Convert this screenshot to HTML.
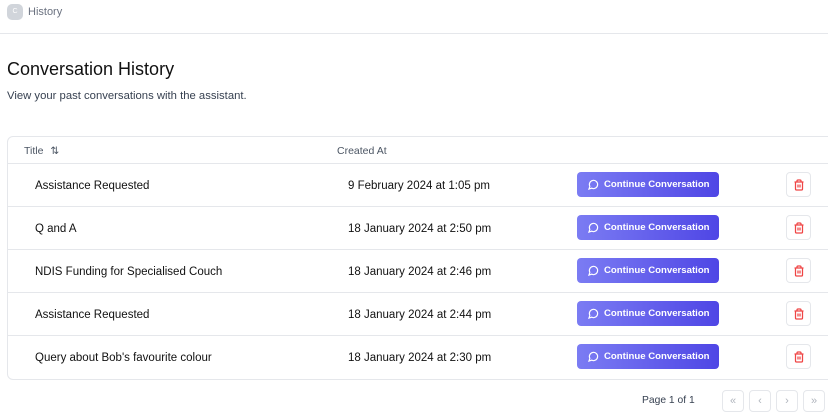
<!DOCTYPE html>
<html><head><style>
*{box-sizing:border-box;margin:0;padding:0}
body{width:828px;height:415px;overflow:hidden;background:#fff;font-family:"Liberation Sans",sans-serif;color:#111827;position:relative}
.top{height:34px;border-bottom:1px solid #e5e7eb;position:relative}
.av{position:absolute;left:7px;top:4px;width:16px;height:16px;border-radius:5px;background:#d1d5db;color:#fff;font-size:7px;text-align:center;line-height:16px}
.hist{position:absolute;left:28px;top:6px;font-size:11px;color:#6b7280}
h1{position:absolute;left:7px;top:59px;font-size:18px;font-weight:normal;color:#111}
.sub{position:absolute;left:7px;top:90px;font-size:11.3px;color:#374151}
.tbl{position:absolute;left:7px;top:136px;width:830px;height:244px;border:1px solid #e5e7eb;border-radius:6px}
.hd{height:27px;border-bottom:1px solid #e5e7eb;position:relative;font-size:10.5px;color:#4b5563}
.row{height:43px;border-bottom:1px solid #e5e7eb;position:relative;font-size:11.5px;color:#111}
.row:last-child{border-bottom:none}
.t{position:absolute;left:27px;top:15.5px}
.d{position:absolute;left:340px;top:15.5px}
.btn{position:absolute;left:569px;top:8px;width:142px;height:25px;border-radius:4px;background:linear-gradient(90deg,#7b7cf3,#4f46e5);color:#fff;font-size:9.6px;font-weight:bold;line-height:25px;padding-left:27px;white-space:nowrap}
.btn svg{position:absolute;left:11px;top:7px}
.del{position:absolute;left:778px;top:8px;width:25px;height:25px;border:1px solid #e5e7eb;border-radius:4px}
.del svg{position:absolute;left:6px;top:6px}
.pg{position:absolute;top:390px;width:22px;height:22px;border:1px solid #e5e7eb;border-radius:4px;color:#b0b5bd;font-size:11px;text-align:center;line-height:20px}
</style></head><body>
<div class="top"><div class="av">C</div><div class="hist">History</div></div>
<h1>Conversation History</h1>
<div class="sub">View your past conversations with the assistant.</div>
<div class="tbl">
<div class="hd"><span style="position:absolute;left:16px;top:8px">Title <span style="margin-left:4px">⇅</span></span><span style="position:absolute;left:329px;top:8px">Created At</span></div>
<div class="row"><span class="t">Assistance Requested</span><span class="d">9 February 2024 at 1:05 pm</span><div class="btn"><svg width="11" height="11" viewBox="0 0 24 24" fill="none" stroke="#fff" stroke-width="2.5"><path d="M7.9 20A9 9 0 1 0 4 16.1L2 22Z"/></svg>Continue Conversation</div><div class="del"><svg width="12" height="12" viewBox="0 0 24 24" fill="none" stroke="#ef4444" stroke-width="2.5"><path d="M3 6h18M19 6v14a2 2 0 0 1-2 2H7a2 2 0 0 1-2-2V6M8 6V4a2 2 0 0 1 2-2h4a2 2 0 0 1 2 2v2M10 11v6M14 11v6"/></svg></div></div>
<div class="row"><span class="t">Q and A</span><span class="d">18 January 2024 at 2:50 pm</span><div class="btn"><svg width="11" height="11" viewBox="0 0 24 24" fill="none" stroke="#fff" stroke-width="2.5"><path d="M7.9 20A9 9 0 1 0 4 16.1L2 22Z"/></svg>Continue Conversation</div><div class="del"><svg width="12" height="12" viewBox="0 0 24 24" fill="none" stroke="#ef4444" stroke-width="2.5"><path d="M3 6h18M19 6v14a2 2 0 0 1-2 2H7a2 2 0 0 1-2-2V6M8 6V4a2 2 0 0 1 2-2h4a2 2 0 0 1 2 2v2M10 11v6M14 11v6"/></svg></div></div>
<div class="row"><span class="t">NDIS Funding for Specialised Couch</span><span class="d">18 January 2024 at 2:46 pm</span><div class="btn"><svg width="11" height="11" viewBox="0 0 24 24" fill="none" stroke="#fff" stroke-width="2.5"><path d="M7.9 20A9 9 0 1 0 4 16.1L2 22Z"/></svg>Continue Conversation</div><div class="del"><svg width="12" height="12" viewBox="0 0 24 24" fill="none" stroke="#ef4444" stroke-width="2.5"><path d="M3 6h18M19 6v14a2 2 0 0 1-2 2H7a2 2 0 0 1-2-2V6M8 6V4a2 2 0 0 1 2-2h4a2 2 0 0 1 2 2v2M10 11v6M14 11v6"/></svg></div></div>
<div class="row"><span class="t">Assistance Requested</span><span class="d">18 January 2024 at 2:44 pm</span><div class="btn"><svg width="11" height="11" viewBox="0 0 24 24" fill="none" stroke="#fff" stroke-width="2.5"><path d="M7.9 20A9 9 0 1 0 4 16.1L2 22Z"/></svg>Continue Conversation</div><div class="del"><svg width="12" height="12" viewBox="0 0 24 24" fill="none" stroke="#ef4444" stroke-width="2.5"><path d="M3 6h18M19 6v14a2 2 0 0 1-2 2H7a2 2 0 0 1-2-2V6M8 6V4a2 2 0 0 1 2-2h4a2 2 0 0 1 2 2v2M10 11v6M14 11v6"/></svg></div></div>
<div class="row"><span class="t">Query about Bob's favourite colour</span><span class="d">18 January 2024 at 2:30 pm</span><div class="btn"><svg width="11" height="11" viewBox="0 0 24 24" fill="none" stroke="#fff" stroke-width="2.5"><path d="M7.9 20A9 9 0 1 0 4 16.1L2 22Z"/></svg>Continue Conversation</div><div class="del"><svg width="12" height="12" viewBox="0 0 24 24" fill="none" stroke="#ef4444" stroke-width="2.5"><path d="M3 6h18M19 6v14a2 2 0 0 1-2 2H7a2 2 0 0 1-2-2V6M8 6V4a2 2 0 0 1 2-2h4a2 2 0 0 1 2 2v2M10 11v6M14 11v6"/></svg></div></div>
</div>
<div style="position:absolute;left:642px;top:395px;font-size:10.3px;color:#374151">Page 1 of 1</div>
<div class="pg" style="left:722px">«</div>
<div class="pg" style="left:749px">‹</div>
<div class="pg" style="left:776px">›</div>
<div class="pg" style="left:803px">»</div>
</body></html>
